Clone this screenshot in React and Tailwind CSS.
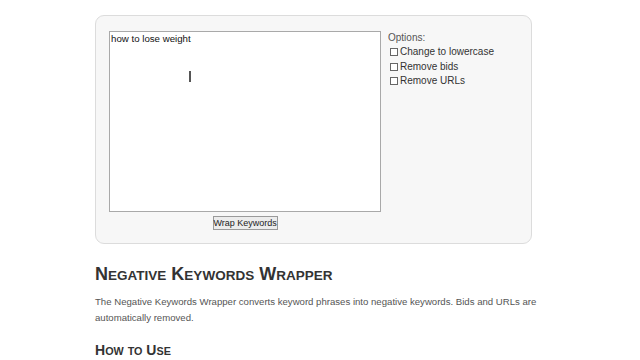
import { useState } from "react";

const options = ["Change to lowercase", "Remove bids", "Remove URLs"];

// faux small caps: uppercase letters at full size, lowercase ones as smaller capitals
function SmallCaps({ text, big, small }) {
  return text.split("").map((ch, i) =>
    ch === " " ? (
      <span key={i} className={big}> </span>
    ) : ch === ch.toUpperCase() ? (
      <span key={i} className={big}>{ch}</span>
    ) : (
      <span key={i} className={small}>{ch.toUpperCase()}</span>
    )
  );
}

export default function App() {
  const [text, setText] = useState("how to lose weight");

  return (
    <div className="min-h-[360px] bg-white font-['Liberation_Sans',Arial,sans-serif]">
      <div className="mx-auto w-[450px] pt-[15px]">
        <div className="w-[437px] h-[229px] rounded-[9px] border border-[#dcdcdc] bg-[#f7f7f7] pl-[13px] pt-[15px] flex gap-[7px]">
          <div className="flex flex-col items-center">
            <div className="relative">
              <textarea
                value={text}
                onChange={(e) => setText(e.target.value)}
                className="block w-[272px] h-[181px] resize-none border border-[#a9a9a9] bg-white px-[1px] pt-[1px] text-[9.7px] leading-[12px] text-[#111] outline-none"
              />
              <span className="pointer-events-none absolute left-[80px] top-[40px] h-[11px] w-[2px] bg-[#555]" />
            </div>
            <button
              type="button"
              className="mt-[4px] h-[14px] w-[65px] px-0 whitespace-nowrap border border-[#9a9a9a] bg-[#ececec] text-[9px] leading-[12px] text-[#222]"
            >
              Wrap Keywords
            </button>
          </div>
          <div className="pt-[1px]">
            <p className="text-[10px] leading-[12px] text-[#555]">Options:</p>
            <div className="mt-[2px] pl-[2px] flex flex-col gap-[2.5px]">
              {options.map((o) => (
                <label key={o} className="flex items-center gap-[2px] text-[10px] leading-[12px] text-[#333]">
                  <input
                    type="checkbox"
                    className="appearance-none m-0 w-[8px] h-[8px] border border-[#666] bg-white checked:bg-[#666]"
                  />
                  {o}
                </label>
              ))}
            </div>
          </div>
        </div>

        <h1 className="mt-[20px] leading-[20px] font-bold text-[#333]">
          <SmallCaps text="Negative Keywords Wrapper" big="text-[18px]" small="text-[13.5px]" />
        </h1>
        <p className="mt-[8px] text-[9.6px] leading-[16px] text-[#555]">
          The Negative Keywords Wrapper converts keyword phrases into negative keywords. Bids and URLs are
          automatically removed.
        </p>
        <h2 className="mt-[14px] leading-[20px] font-bold text-[#333]">
          <SmallCaps text="How to Use" big="text-[14px]" small="text-[10.8px]" />
        </h2>
      </div>
    </div>
  );
}
